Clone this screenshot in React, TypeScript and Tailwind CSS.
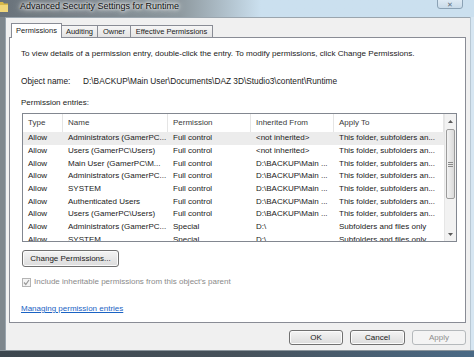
const rows: string[][] = [
  ['Allow', 'Administrators (GamerPC...', 'Full control', '<not inherited>', 'This folder, subfolders an...'],
  ['Allow', 'Users (GamerPC\\Users)', 'Full control', '<not inherited>', 'This folder, subfolders an...'],
  ['Allow', 'Main User (GamerPC\\M...', 'Full control', 'D:\\BACKUP\\Main ...', 'This folder, subfolders an...'],
  ['Allow', 'Administrators (GamerPC...', 'Full control', 'D:\\BACKUP\\Main ...', 'This folder, subfolders an...'],
  ['Allow', 'SYSTEM', 'Full control', 'D:\\BACKUP\\Main ...', 'This folder, subfolders an...'],
  ['Allow', 'Authenticated Users', 'Full control', 'D:\\BACKUP\\Main ...', 'This folder, subfolders an...'],
  ['Allow', 'Users (GamerPC\\Users)', 'Full control', 'D:\\BACKUP\\Main ...', 'This folder, subfolders an...'],
  ['Allow', 'Administrators (GamerPC...', 'Special', 'D:\\', 'Subfolders and files only'],
  ['Allow', 'SYSTEM', 'Special', 'D:\\', 'Subfolders and files only'],
];

const headers = ['Type', 'Name', 'Permission', 'Inherited From', 'Apply To'];

function Button({ label, disabled, className }: { label: string; disabled?: boolean; className?: string }) {
  return (
    <div
      className={
        'flex items-center justify-center rounded-[3px] border text-[8px] leading-none ' +
        (disabled
          ? 'border-[#b5b9bc] bg-[#f4f4f4] text-[#8d8d8d] '
          : 'border-[#707070] bg-linear-to-b from-[#f4f4f4] to-[#dcdcdc] text-[#1a1a1a] shadow-[inset_0_0_0_1px_#fbfbfb] ') +
        (className ?? '')
      }
    >
      {label}
    </div>
  );
}

function Tab({ label, active, className }: { label: string; active?: boolean; className?: string }) {
  return (
    <div
      className={
        'flex items-center justify-center border border-b-0 border-[#898c95] text-[7.5px] leading-none text-[#1a1a1a] ' +
        (active
          ? 'relative z-10 -mb-px h-[15px] bg-white '
          : '-ml-px h-[12px] bg-linear-to-b from-[#f6f6f6] to-[#e4e4e4] ') +
        (className ?? '')
      }
    >
      {label}
    </div>
  );
}

function ScrollBar() {
  return (
    <div className="flex w-[12px] flex-col border-l border-[#e6e6e6] bg-[#f2f2f2]">
      <div className="flex h-[15px] items-center justify-center">
        <svg width="5" height="3" viewBox="0 0 5 3">
          <path d="M0 3 L2.5 0 L5 3 Z" fill="#5a5a5a" />
        </svg>
      </div>
      <div className="mx-[1px] flex h-[70px] items-center justify-center rounded-[2px] border border-[#9c9c9c] bg-linear-to-r from-[#f3f3f3] to-[#dadada]">
        <div className="flex flex-col gap-[1px]">
          <div className="h-px w-[5px] bg-[#8a8a8a]" />
          <div className="h-px w-[5px] bg-[#8a8a8a]" />
          <div className="h-px w-[5px] bg-[#8a8a8a]" />
        </div>
      </div>
      <div className="flex-1" />
      <div className="flex h-[14px] items-center justify-center">
        <svg width="5" height="3" viewBox="0 0 5 3">
          <path d="M0 0 L2.5 3 L5 0 Z" fill="#5a5a5a" />
        </svg>
      </div>
    </div>
  );
}

export default function App() {
  return (
    <div className="relative flex h-[357px] w-[474px] flex-col overflow-hidden bg-[#f0f0f0] font-['Liberation_Sans',Arial,sans-serif]">
      {/* title bar */}
      <div className="flex h-[17px] items-center bg-linear-to-r from-[#69727a] via-[#8e999f] via-[38%] to-[#cbe0ef] to-[55%]">
        <svg width="8" height="12" viewBox="0 0 8 12" className="mt-[-4px] shrink-0">
          <path d="M0 1 L3 1 L4 2.5 L8 2.5 L8 11 L0 11 Z" fill="#d9b94a" />
          <path d="M0 4 L8 4 L8 11 L0 11 Z" fill="#f1d77b" />
        </svg>
        <span className="ml-[12px] mt-[-5px] text-[9px] leading-none text-[#101010] [text-shadow:0_0_5px_#fff,0_0_8px_#fff,0_0_3px_#fff]">
          Advanced Security Settings for Runtime
        </span>
      </div>
      <div className="absolute right-[11px] top-[-3px] flex h-[12px] w-[26px] items-center justify-center rounded-b-[3px] border border-[#8ba2b5] bg-linear-to-b from-[#e3eef7] to-[#c9dbe9]">
        <span className="mt-[2px] text-[7px] leading-none text-[#5d6f7e]">✕</span>
      </div>

      <div className="flex flex-1">
        <div className="w-[5px] bg-[#7e878d]" />
        {/* dialog body */}
        <div className="flex flex-1 flex-col border-l border-t border-[#9aa5ae] bg-[#f0f0f0] pl-[3px] pt-[5px]">
          <div className="flex items-end pl-[2px]">
            <Tab label="Permissions" active className="w-[51px]" />
            <Tab label="Auditing" className="w-[37px]" />
            <Tab label="Owner" className="w-[34px]" />
            <Tab label="Effective Permissions" className="w-[83px]" />
          </div>
          {/* tab panel */}
          <div className="flex h-[286px] w-[457px] flex-col border border-[#898c95] bg-white pl-[11px] text-[8px] leading-[10px] text-[#1a1a1a]">
            <div className="mt-[11px] text-[8.1px]">
              To view details of a permission entry, double-click the entry. To modify permissions, click Change Permissions.
            </div>
            <div className="mt-[17px] flex text-[8.3px]">
              <span className="w-[62px]">Object name:</span>
              <span>D:\BACKUP\Main User\Documents\DAZ 3D\Studio3\content\Runtime</span>
            </div>
            <div className="mt-[12px]">Permission entries:</div>
            {/* list view */}
            <div className="ml-px mt-[5px] flex h-[129px] w-[435px] overflow-hidden border border-[#828790] bg-white">
              <div className="flex flex-1 flex-col overflow-hidden">
                <div className="grid h-[18px] shrink-0 grid-cols-[40px_105px_83px_83px_110px] text-[#3a3a3a]">
                  {headers.map((h) => (
                    <div key={h} className="flex items-center border-r border-[#e5e5e5] pl-[5px]">
                      {h}
                    </div>
                  ))}
                </div>
                {rows.map((r, i) => (
                  <div
                    key={i}
                    className={
                      'grid h-[12.7px] shrink-0 grid-cols-[40px_105px_83px_83px_110px] items-center ' +
                      (i === 0 ? 'bg-[#ececec]' : '')
                    }
                  >
                    {r.map((c, j) => (
                      <div key={j} className="overflow-hidden whitespace-nowrap pl-[5px]">
                        {c}
                      </div>
                    ))}
                  </div>
                ))}
              </div>
              <ScrollBar />
            </div>
            <Button label="Change Permissions..." className="ml-px mt-[8px] h-[17px] w-[97px]" />
            <div className="ml-px mt-[10px] flex items-center">
              <div className="flex h-[9px] w-[9px] items-center justify-center border border-[#b4b4b4] bg-[#f4f4f4]">
                <svg width="7" height="7" viewBox="0 0 7 7">
                  <path d="M1 3.5 L2.8 5.5 L6 1" fill="none" stroke="#9a9a9a" strokeWidth="1.2" />
                </svg>
              </div>
              <span className="ml-[3px] text-[#8a8a8a]">Include inheritable permissions from this object's parent</span>
            </div>
            <div className="mt-[17px] text-[#1a63c4] underline">Managing permission entries</div>
          </div>
          {/* dialog buttons */}
          <div className="mt-[7px] flex justify-end gap-[7px] pr-[4px]">
            <Button label="OK" className="h-[15px] w-[54px]" />
            <Button label="Cancel" className="h-[15px] w-[55px]" />
            <Button label="Apply" disabled className="h-[15px] w-[54px]" />
          </div>
        </div>
        <div className="w-[4px] border-l border-[#b8c8d4] bg-[#d6e6f2]" />
      </div>
      <div className="h-[7px] border-t border-[#8a949b] bg-linear-to-r from-[#3d474f] via-[#46515a] to-[#4a6a86]" />
    </div>
  );
}
